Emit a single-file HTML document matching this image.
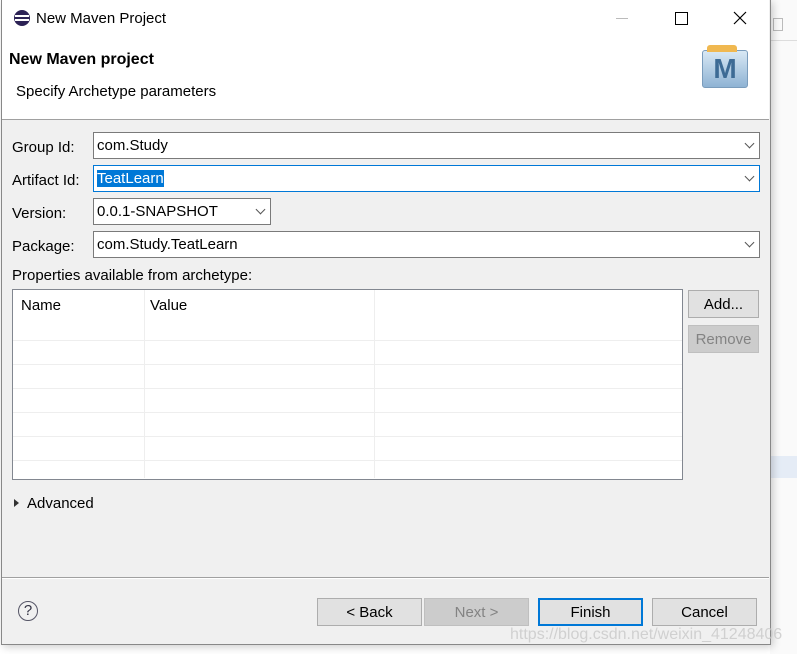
<!DOCTYPE html>
<html><head><style>
body{margin:0;width:797px;height:654px;background:#fff;position:relative;overflow:hidden;font-family:"Liberation Sans",sans-serif;font-size:15px;color:#000}
.a{position:absolute}
.dlg{left:1px;top:0;width:768px;height:644px;background:#f0f0f0;border-left:1px solid #888;border-right:1px solid #888;border-bottom:1px solid #888;box-shadow:2px 2px 8px rgba(0,0,0,.2)}
.f{background:#fff;border:1px solid #7a7a7a;box-sizing:border-box;height:27px;padding:4px 3px;font-size:15px}
.chev{position:absolute;right:6px;top:7px;width:6px;height:6px;border-right:1px solid #555;border-bottom:1px solid #555;transform:rotate(45deg)}
.btn{position:absolute;border:1px solid #adadad;background:#e1e1e1;box-sizing:border-box;text-align:center;font-size:15px;line-height:28px}
</style></head><body>
<div class="a" style="left:770px;top:0;width:27px;height:654px;background:#fafafa"></div>
<div class="a" style="left:770px;top:40px;width:27px;height:1px;background:#ddd"></div>
<div class="a" style="left:773px;top:18px;width:8px;height:11px;border:1px solid #bbb"></div>
<div class="a" style="left:770px;top:456px;width:27px;height:22px;background:#e5ecf6"></div>
<div class="a dlg"></div>
<div class="a" style="left:2px;top:0;width:767px;height:119px;background:#fff;border-bottom:1px solid #a0a0a0"></div>
<div class="a" style="left:14px;top:10px;width:16px;height:16px;border-radius:50%;background:#2c2255"></div>
<div class="a" style="left:15px;top:15px;width:14px;height:2px;background:#fff"></div>
<div class="a" style="left:15px;top:19px;width:14px;height:2px;background:#fff"></div>
<div class="a" style="left:36px;top:10px;font-size:15px">New Maven Project</div>
<div class="a" style="left:616px;top:18px;width:12px;height:1px;background:#bbb"></div>
<div class="a" style="left:675px;top:12px;width:11px;height:11px;border:1px solid #000"></div>
<svg class="a" style="left:733px;top:11px" width="14" height="14" viewBox="0 0 14 14"><path d="M1 1L13 13M13 1L1 13" stroke="#000" stroke-width="1.2"/></svg>
<div class="a" style="left:9px;top:51px;font-weight:bold;font-size:16px">New Maven project</div>
<div class="a" style="left:16px;top:83px">Specify Archetype parameters</div>
<div class="a" style="left:702px;top:50px;width:44px;height:36px;background:linear-gradient(#d8e8f4,#8fb3d4);border:1px solid #7a9cbc;border-radius:3px;color:#3d6b95;font-weight:bold;font-size:28px;text-align:center;line-height:36px">M</div>
<div class="a" style="left:707px;top:45px;width:30px;height:7px;background:#f0b850;border-radius:3px 3px 0 0"></div>

<div class="a" style="left:12px;top:139px">Group Id:</div>
<div class="a f" style="left:93px;top:132px;width:667px">com.Study<span class="chev"></span></div>
<div class="a" style="left:12px;top:172px">Artifact Id:</div>
<div class="a f" style="left:93px;top:165px;width:667px;border-color:#0078d7"><span style="background:#0078d7;color:#fff">TeatLearn</span><span class="chev"></span></div>
<div class="a" style="left:12px;top:205px">Version:</div>
<div class="a f" style="left:93px;top:198px;width:178px">0.0.1-SNAPSHOT<span class="chev"></span></div>
<div class="a" style="left:12px;top:238px">Package:</div>
<div class="a f" style="left:93px;top:231px;width:667px">com.Study.TeatLearn<span class="chev"></span></div>
<div class="a" style="left:12px;top:267px">Properties available from archetype:</div>

<div class="a" style="left:12px;top:289px;width:669px;height:189px;background:#fff;border:1px solid #828790">
 <div class="a" style="left:8px;top:7px">Name</div>
 <div class="a" style="left:137px;top:7px">Value</div>
 <div class="a" style="left:131px;top:0;width:1px;height:188px;background:#eee"></div>
 <div class="a" style="left:361px;top:0;width:1px;height:188px;background:#eee"></div>
 <div class="a" style="left:0;top:50px;width:669px;height:1px;background:#eee"></div>
 <div class="a" style="left:0;top:74px;width:669px;height:1px;background:#eee"></div>
 <div class="a" style="left:0;top:98px;width:669px;height:1px;background:#eee"></div>
 <div class="a" style="left:0;top:122px;width:669px;height:1px;background:#eee"></div>
 <div class="a" style="left:0;top:146px;width:669px;height:1px;background:#eee"></div>
 <div class="a" style="left:0;top:170px;width:669px;height:1px;background:#eee"></div>
</div>
<div class="btn" style="left:688px;top:290px;width:71px;height:28px">Add...</div>
<div class="btn" style="left:688px;top:325px;width:71px;height:28px;background:#ccc;color:#838383;border-color:#bfbfbf">Remove</div>
<div class="a" style="left:14px;top:499px;width:0;height:0;border-left:5px solid #333;border-top:4px solid transparent;border-bottom:4px solid transparent"></div>
<div class="a" style="left:27px;top:495px">Advanced</div>
<div class="a" style="left:2px;top:577px;width:767px;height:1px;background:#a0a0a0"></div>
<div class="a" style="left:2px;top:578px;width:767px;height:1px;background:#fff"></div>
<div class="a" style="left:18px;top:601px;width:18px;height:18px;border:1px solid #556;border-radius:50%;text-align:center;font-size:15px;line-height:18px;color:#334">?</div>
<div class="btn" style="left:317px;top:598px;width:105px;height:28px">&lt; Back</div>
<div class="btn" style="left:424px;top:598px;width:105px;height:28px;background:#ccc;color:#838383;border-color:#bfbfbf">Next &gt;</div>
<div class="btn" style="left:538px;top:598px;width:105px;height:28px;border:2px solid #0078d7;line-height:26px">Finish</div>
<div class="btn" style="left:652px;top:598px;width:105px;height:28px">Cancel</div>
<div class="a" style="left:510px;top:626px;color:rgba(200,200,200,.8);font-size:16px">https://blog.csdn.net/weixin_41248406</div>
</body></html>
